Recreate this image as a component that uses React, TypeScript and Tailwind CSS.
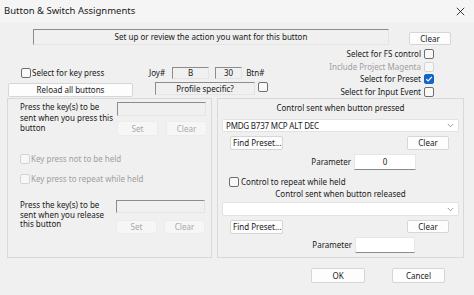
import React from "react";

const Cb = ({ checked = false, disabled = false }: { checked?: boolean; disabled?: boolean }) => (
  <span
    className={
      "inline-flex items-center justify-center w-[10px] h-[10px] rounded-[2px] border shrink-0 " +
      (checked
        ? "bg-[#1565c8] border-[#1565c8]"
        : disabled
        ? "bg-[#f7f7f7] border-[#d4d4d4]"
        : "bg-[#f9f9f9] border-[#6e6e6e]")
    }
  >
    {checked && (
      <svg width="8" height="8" viewBox="0 0 8 8">
        <path d="M1.3 4.2 L3.2 6 L6.8 1.8" stroke="white" strokeWidth="1.2" fill="none" />
      </svg>
    )}
  </span>
);

const Btn = ({ label, w, h = 14, disabled = false, cls = "" }: { label: string; w: number; h?: number; disabled?: boolean; cls?: string }) => (
  <div
    className={
      "flex items-center justify-center rounded-[2px] border " +
      (disabled ? "bg-[#f6f6f6] border-[#ececec] text-[#a8a8a8] " : "bg-[#fdfdfd] border-[#d6d6d6] text-[#1a1a1a] ") +
      cls
    }
    style={{ width: w, height: h }}
  >
    {label}
  </div>
);

const Sunken = ({ w, h, children, cls = "" }: { w: number; h: number; children?: React.ReactNode; cls?: string }) => (
  <div
    className={"flex items-center justify-center border border-t-[#8c8c8c] border-l-[#8c8c8c] border-r-[#e4e4e4] border-b-[#e4e4e4] bg-[#f0f0f0] " + cls}
    style={{ width: w, height: h }}
  >
    {children}
  </div>
);

const TextBox = ({ w, h, children }: { w: number; h: number; children?: React.ReactNode }) => (
  <div
    className="flex items-center justify-center bg-white border border-[#e6e6e6] border-b-[#8a8a8a] rounded-[1px]"
    style={{ width: w, height: h }}
  >
    {children}
  </div>
);

const Combo = ({ text, h }: { text?: string; h: number }) => (
  <div
    className="ml-[4px] w-[237px] flex items-center bg-white border border-[#e2e2e2] rounded-[2px] pl-[3px] pr-[4px]"
    style={{ height: h }}
  >
    <span className="flex-1 text-[#1a1a1a] tracking-[-0.2px]">{text}</span>
    <svg width="7" height="5" viewBox="0 0 7 5">
      <path d="M0.8 1 L3.5 3.8 L6.2 1" stroke="#8a8a8a" strokeWidth="0.8" fill="none" />
    </svg>
  </div>
);

export default function App() {
  return (
    <div
      className="w-[474px] h-[295px] bg-[#f0f0f0] overflow-hidden text-[8px] leading-[10px] text-[#1a1a1a]"
      style={{ fontFamily: '"Noto Sans", "Open Sans", sans-serif' }}
    >
      {/* Title bar */}
      <div className="h-[22px] flex items-center pl-[4px] pr-[9px] bg-[#f5f5f5]">
        <span className="text-[9.5px] leading-[12px] flex-1">Button &amp; Switch Assignments</span>
        <svg width="9" height="9" viewBox="0 0 9 9">
          <path d="M0.8 0.8 L8.2 8.2 M8.2 0.8 L0.8 8.2" stroke="#222" strokeWidth="0.9" />
        </svg>
      </div>

      {/* Status row */}
      <div className="flex mt-[7px] pl-[33px]">
        <Sunken w={356} h={16}>
          <span>Set up or review the action you want for this button</span>
        </Sunken>
        <Btn label="Clear" w={42} h={13} cls="ml-[20px] mt-[3px]" />
      </div>

      {/* Options row */}
      <div className="flex h-[53px]">
        <div className="ml-[8px] mt-[23px] w-[125px] flex flex-col">
          <div className="flex items-center h-[10px] ml-[13px] gap-[1px]">
            <Cb />
            <span>Select for key press</span>
          </div>
          <Btn label="Reload all buttons" w={125} h={14} cls="mt-[5px]" />
        </div>

        <div className="ml-[16px] mt-[22px] flex flex-col">
          <div className="flex items-center h-[12px]">
            <span>Joy#</span>
            <Sunken w={37} h={12} cls="ml-[7px]">B</Sunken>
            <Sunken w={27} h={12} cls="ml-[6px]">30</Sunken>
            <span className="ml-[4px]">Btn#</span>
          </div>
          <div className="flex items-start mt-[3px] ml-[6px]">
            <Sunken w={100} h={13}>Profile specific?</Sunken>
            <span className="ml-[3px]"><Cb /></span>
          </div>
        </div>

        <div className="ml-auto mr-[40px] pt-[3px] flex flex-col items-end">
          <div className="flex items-center h-[12.5px] gap-[3px]">
            <span>Select for FS control</span>
            <Cb />
          </div>
          <div className="flex items-center h-[12.5px] gap-[3px]">
            <span className="text-[#a0a0a0]">Include Project Magenta</span>
            <Cb disabled />
          </div>
          <div className="flex items-center h-[12.5px] gap-[3px]">
            <span>Select for Preset</span>
            <Cb checked />
          </div>
          <div className="flex items-center h-[12.5px] gap-[3px]">
            <span>Select for Input Event</span>
            <Cb />
          </div>
        </div>
      </div>

      {/* Panels */}
      <div className="flex h-[160px]">
        {/* Left panel */}
        <div className="ml-[7px] w-[205px] h-[160px] border border-[#d9d9d9] flex flex-col">
          <div className="flex mt-[3px]">
            <div className="ml-[12px] w-[97px] leading-[10.5px]">
              Press the key(s) to be<br />sent when you press this<br />button
            </div>
            <div className="flex flex-col">
              <Sunken w={89} h={14} cls="bg-[#f0f0f0]" />
              <div className="flex mt-[5px] gap-[8px]">
                <Btn label="Set" w={41} h={15} disabled />
                <Btn label="Clear" w={41} h={15} disabled />
              </div>
            </div>
          </div>
          <div className="flex items-center h-[10px] mt-[18px] ml-[12px] gap-[1px] text-[#a0a0a0]">
            <Cb disabled />
            <span>Key press not to be held</span>
          </div>
          <div className="flex items-center h-[10px] mt-[10px] ml-[12px] gap-[1px] text-[#a0a0a0]">
            <Cb disabled />
            <span>Key press to repeat while held</span>
          </div>
          <div className="flex mt-[16px]">
            <div className="ml-[12px] w-[96px] leading-[9.5px]">
              Press the key(s) to be<br />sent when you release<br />this button
            </div>
            <div className="flex flex-col">
              <Sunken w={89} h={13} cls="bg-[#f0f0f0]" />
              <div className="flex mt-[7px] gap-[7px]">
                <Btn label="Set" w={41} h={14} disabled />
                <Btn label="Clear" w={41} h={14} disabled />
              </div>
            </div>
          </div>
        </div>

        {/* Right panel */}
        <div className="ml-[5px] w-[247px] h-[160px] border border-[#d9d9d9] flex flex-col">
          <div className="mt-[4px] text-center">Control sent when button pressed</div>
          <div className="mt-[6px]">
            <Combo text="PMDG B737 MCP ALT DEC" h={13} />
          </div>
          <div className="flex mt-[4px]">
            <Btn label="Find Preset..." w={53} h={14} cls="ml-[12px] justify-start pl-[2px]" />
            <Btn label="Clear" w={42} h={14} cls="ml-auto mr-[14px]" />
          </div>
          <div className="flex items-center justify-end mt-[4px] pr-[47px]">
            <span className="mr-[3px]">Parameter</span>
            <TextBox w={62} h={16}>0</TextBox>
          </div>
          <div className="flex items-center h-[10px] mt-[7px] ml-[11px] gap-[2px]">
            <Cb />
            <span>Control to repeat while held</span>
          </div>
          <div className="mt-[2px] text-center">Control sent when button released</div>
          <div className="mt-[3px]">
            <Combo h={14} />
          </div>
          <div className="flex mt-[4px]">
            <Btn label="Find Preset..." w={53} h={14} cls="ml-[12px] justify-start pl-[2px]" />
            <Btn label="Clear" w={42} h={13} cls="ml-auto mr-[14px]" />
          </div>
          <div className="flex items-center justify-end mt-[3px] pr-[48px]">
            <span className="mr-[3px]">Parameter</span>
            <TextBox w={60} h={16} />
          </div>
        </div>
      </div>

      {/* Bottom buttons */}
      <div className="flex mt-[10px] ml-[311px] gap-[27px]">
        <Btn label="OK" w={54} h={15} />
        <Btn label="Cancel" w={53} h={15} />
      </div>
    </div>
  );
}
